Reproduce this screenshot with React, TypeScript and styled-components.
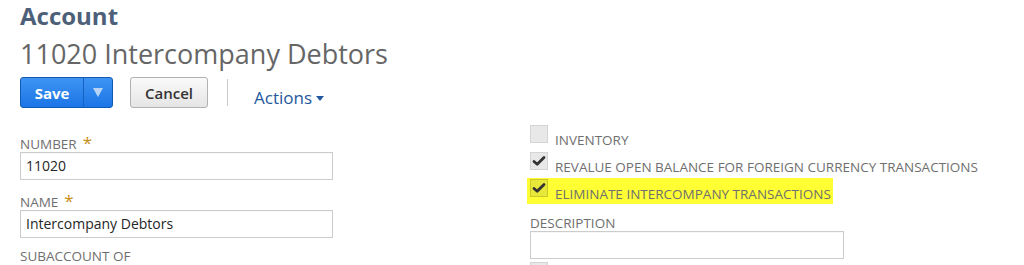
import React from "react";
import styled, { createGlobalStyle } from "styled-components";

const Global = createGlobalStyle`
  html, body { margin: 0; padding: 0; background: #fff; }
  body { font-family: "Open Sans", "Liberation Sans", sans-serif; }
  * { box-sizing: border-box; }
`;

const Page = styled.div`
  padding: 0 0 0 20px;
  width: 1024px;
  height: 265px;
  overflow: hidden;
`;

const RecordType = styled.h1`
  margin: 0;
  padding-top: 1px;
  font-size: 24px;
  line-height: 30px;
  font-weight: 700;
  color: #4d5f79;
`;

const RecordName = styled.h2`
  margin: 0;
  margin-top: 7px;
  font-size: 27px;
  line-height: 31px;
  font-weight: 400;
  color: #666;
`;

const Toolbar = styled.div`
  display: flex;
  align-items: center;
  margin-top: 8px;
  height: 31px;
`;

const SplitButton = styled.div`
  display: flex;
  height: 31px;
  border: 1px solid #125ab2;
  border-radius: 3px;
  background: linear-gradient(#3f94f2, #1a75e6);
  overflow: hidden;
`;

const PrimaryPart = styled.button<{ $narrow?: boolean }>`
  border: 0;
  background: transparent;
  color: #fff;
  font-family: inherit;
  font-weight: 700;
  font-size: 15px;
  padding: 0;
  width: ${(p) => (p.$narrow ? "29px" : "62px")};
  border-left: ${(p) => (p.$narrow ? "1px solid #1462c4" : "0")};
  display: flex;
  align-items: center;
  justify-content: center;
`;

const Caret = styled.span`
  width: 0;
  height: 0;
  border-left: 5px solid transparent;
  border-right: 5px solid transparent;
  border-top: 9px solid #b7d3f6;
`;

const SecondaryButton = styled.button`
  margin-left: 17px;
  height: 31px;
  width: 78px;
  border: 1px solid #b2b2b2;
  border-radius: 3px;
  background: linear-gradient(#fafafa, #e5e5e5);
  color: #333;
  font-family: inherit;
  font-weight: 600;
  font-size: 15px;
  padding: 0;
`;

const Divider = styled.div`
  width: 1px;
  height: 27px;
  background: #ccc;
  margin-left: 19px;
`;

const ActionsMenu = styled.div`
  margin-left: 26px;
  margin-top: 10px;
  display: flex;
  align-items: center;
  gap: 4px;
  color: #24589e;
  font-size: 17px;
  font-weight: 500;
`;

const SmallCaret = styled.span`
  width: 0;
  height: 0;
  border-left: 4px solid transparent;
  border-right: 4px solid transparent;
  border-top: 5px solid #24589e;
  margin-top: 2px;
`;

const Columns = styled.div`
  display: grid;
  grid-template-columns: 510px 1fr;
  margin-top: 16px;
`;

const Column = styled.div<{ $pad?: number }>`
  display: flex;
  flex-direction: column;
  padding-top: ${(p) => p.$pad ?? 0}px;
`;

const Field = styled.div<{ $gap?: number }>`
  display: flex;
  flex-direction: column;
  margin-bottom: ${(p) => p.$gap ?? 12}px;
`;

const Label = styled.label<{ $top?: number }>`
  font-size: 13.5px;
  line-height: 16px;
  color: #6f6f6f;
  text-transform: uppercase;
  margin-top: ${(p) => p.$top ?? 0}px;
  margin-bottom: 0;
  display: flex;
  gap: 6px;
`;

const Required = styled.span`
  color: #c78d16;
  font-size: 17px;
  line-height: 14px;
`;

const TextInput = styled.div<{ $width: number }>`
  width: ${(p) => p.$width}px;
  height: 28px;
  border: 1px solid #cccccc;
  box-shadow: inset 0 1px 1px rgba(0,0,0,0.03);
  font-size: 14px;
  color: #262626;
  padding: 4px 5px;
  line-height: 18px;
`;

const CheckRow = styled.div<{ $highlight?: boolean }>`
  display: flex;
  align-items: center;
  gap: 7px;
  height: 26px;
  margin-left: ${(p) => (p.$highlight ? "-3px" : "0")};
  padding-left: ${(p) => (p.$highlight ? "3px" : "0")};
  width: ${(p) => (p.$highlight ? "306px" : "auto")};
  background: ${(p) => (p.$highlight ? "#ffff33" : "transparent")};
  margin-bottom: 1px;
`;

const Box = styled.span<{ $highlight?: boolean }>`
  width: 18px;
  height: 18px;
  border: 1px solid ${(p) => (p.$highlight ? "#c9c92a" : "#d4d4d4")};
  background: ${(p) => (p.$highlight ? "#e8e83a" : "#e8e8e8")};
  display: flex;
  align-items: center;
  justify-content: center;
  margin-top: -6px;
`;

const CheckLabel = styled.span`
  font-size: 13.5px;
  color: #6f6f6f;
  text-transform: uppercase;
  margin-top: 6px;
  white-space: nowrap;
`;

const Tick = () => (
  <svg width="14" height="12" viewBox="0 0 14 12">
    <path d="M2 6.5 L5.2 9.3 L12 2.5" fill="none" stroke="#333" strokeWidth="2.8" strokeLinecap="round" strokeLinejoin="round" />
  </svg>
);

const Check = ({ label, checked, highlight }: { label: string; checked?: boolean; highlight?: boolean }) => (
  <CheckRow $highlight={highlight}>
    <Box $highlight={highlight}>{checked && <Tick />}</Box>
    <CheckLabel>{label}</CheckLabel>
  </CheckRow>
);

export default function App() {
  return (
    <Page>
      <Global />
      <RecordType>Account</RecordType>
      <RecordName>11020 Intercompany Debtors</RecordName>
      <Toolbar>
        <SplitButton>
          <PrimaryPart>Save</PrimaryPart>
          <PrimaryPart $narrow>
            <Caret />
          </PrimaryPart>
        </SplitButton>
        <SecondaryButton>Cancel</SecondaryButton>
        <Divider />
        <ActionsMenu>
          Actions
          <SmallCaret />
        </ActionsMenu>
      </Toolbar>
      <Columns>
        <Column $pad={12}>
          <Field $gap={14}>
            <Label>
              Number <Required>*</Required>
            </Label>
            <TextInput $width={313}>11020</TextInput>
          </Field>
          <Field $gap={10}>
            <Label>
              Name <Required>*</Required>
            </Label>
            <TextInput $width={313}>Intercompany Debtors</TextInput>
          </Field>
          <Field>
            <Label>Subaccount of</Label>
          </Field>
        </Column>
        <Column>
          <Check label="Inventory" />
          <Check label="Revalue open balance for foreign currency transactions" checked />
          <Check label="Eliminate intercompany transactions" checked highlight />
          <Field $gap={9}>
            <Label $top={10}>Description</Label>
            <TextInput $width={314} />
          </Field>
          <Box />
        </Column>
      </Columns>
    </Page>
  );
}
